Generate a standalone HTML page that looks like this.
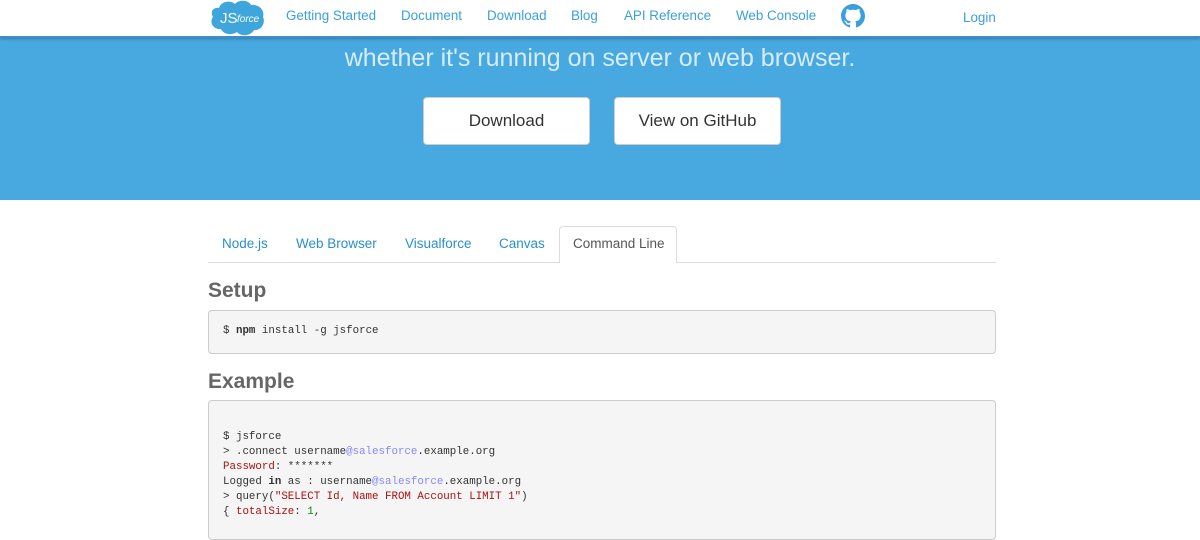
<!DOCTYPE html>
<html><head><meta charset="utf-8"><style>
*{margin:0;padding:0;box-sizing:border-box}
body{width:1200px;height:521px;overflow:hidden;background:#fff;font-family:"Liberation Sans",sans-serif;position:relative}
.hdr{position:absolute;top:0;left:0;width:1200px;height:38px;background:#fff;border-bottom:2px solid #3a8fc8;box-shadow:0 1px 3px rgba(0,0,0,.3);z-index:2}
.nav{position:absolute;top:8px;font-size:13.4px;color:#3aa0dd}
.hero{position:absolute;top:38px;left:0;width:1200px;height:162px;background:#48a9e1}
.sub{position:absolute;top:44px;left:0;width:1200px;text-align:center;color:#d6ecfa;font-size:25px;font-weight:300}
.btn{position:absolute;top:97px;width:167px;height:48px;background:#fff;border:1px solid #ccc;border-radius:4px;text-align:center;line-height:46px;font-size:17px;color:#333}
.tab{position:absolute;top:236px;font-size:13.5px;color:#2a8fd0}
.h2{position:absolute;left:208px;font-size:21px;font-weight:bold;color:#666}
.pre{position:absolute;left:208px;width:788px;background:#f5f5f5;border:1px solid #ccc;border-radius:4px;font-family:"Liberation Mono",monospace;font-size:10.8px;color:#333;line-height:15px;padding-left:14px}
.r{color:#a11}.p{color:#88f}.g{color:#181}
</style></head><body>
<div class="hdr">
<svg style="position:absolute;left:209px;top:0" width="57" height="36" viewBox="0 0 57 36"><path d="M10 8 C12 1 22 0 26 4 C30 -1 40 0 42 5 C50 4 56 10 54 17 C57 23 52 31 45 30 C42 36 32 37 28 32 C22 36 14 34 12 29 C4 30 0 22 4 17 C1 12 4 7 10 8Z" fill="#3ea6dd"/><text x="11" y="23" fill="#fff" font-family="Liberation Sans" font-size="15">JS</text><text x="28" y="22" fill="#fff" font-family="Liberation Sans" font-style="italic" font-size="10">force</text></svg>
<span class="nav" style="left:286px">Getting Started</span>
<span class="nav" style="left:401px">Document</span>
<span class="nav" style="left:487px">Download</span>
<span class="nav" style="left:571px">Blog</span>
<span class="nav" style="left:624px">API Reference</span>
<span class="nav" style="left:736px">Web Console</span>
<svg style="position:absolute;left:841px;top:4px" width="24" height="24" viewBox="0 0 16 16"><path fill="#3aa0dd" d="M8 0C3.58 0 0 3.58 0 8c0 3.54 2.29 6.53 5.470 7.59.4.07.55-.17.55-.38 0-.19-.01-.82-.01-1.49-2.01.37-2.53-.49-2.69-.94-.09-.23-.48-.94-.82-1.13-.28-.15-.68-.52-.01-.53.63-.01 1.08.58 1.23.82.72 1.21 1.87.87 2.33.66.07-.52.28-.87.51-1.07-1.78-.2-3.64-.89-3.64-3.95 0-.87.31-1.59.82-2.15-.08-.2-.36-1.02.08-2.12 0 0 .67-.21 2.2.82.64-.18 1.32-.27 2-.27.68 0 1.36.09 2 .27 1.53-1.04 2.2-.82 2.2-.82.44 1.1.16 1.92.08 2.12.51.56.82 1.27.82 2.15 0 3.07-1.87 3.75-3.65 3.95.29.25.54.73.54 1.48 0 1.07-.01 1.93-.01 2.2 0 .21.15.46.55.38A8.013 8.013 0 0016 8c0-4.42-3.58-8-8-8z"/></svg>
<span class="nav" style="left:963px;top:10px">Login</span>
</div>
<div class="hero"></div>
<div class="sub">whether it's running on server or web browser.</div>
<div class="btn" style="left:423px">Download</div>
<div class="btn" style="left:614px">View on GitHub</div>
<div style="position:absolute;left:208px;top:262px;width:788px;border-top:1px solid #ddd"></div>
<div style="position:absolute;left:559px;top:226px;width:118px;height:37px;background:#fff;border:1px solid #ddd;border-bottom:none;border-radius:4px 4px 0 0"></div>
<span class="tab" style="left:222px">Node.js</span>
<span class="tab" style="left:296px">Web Browser</span>
<span class="tab" style="left:405px">Visualforce</span>
<span class="tab" style="left:499px">Canvas</span>
<span class="tab" style="left:573px;color:#555">Command Line</span>
<div class="h2" style="top:279px">Setup</div>
<div class="pre" style="top:310px;height:44px;padding-top:13px">$ <b>npm</b> install -g jsforce</div>
<div class="h2" style="top:370px">Example</div>
<div class="pre" style="top:400px;height:140px;padding-top:29px">$ jsforce<br>&gt; .connect username<span class="p">@salesforce</span>.example.org<br><span class="r">Password</span>: *******<br>Logged <b>in</b> as : username<span class="p">@salesforce</span>.example.org<br>&gt; query(<span class="r">"SELECT Id, Name FROM Account LIMIT 1"</span>)<br>{ <span class="r">totalSize</span>: <span class="g">1</span>,</div>
</body></html>
